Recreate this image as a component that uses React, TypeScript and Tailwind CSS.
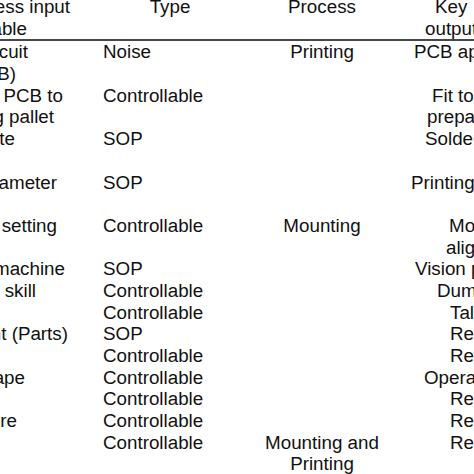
import React from "react";

type Cell = { t: string; cls: string } | null;

interface Line {
  input: Cell;
  type?: string;
  process?: string;
  output: Cell;
}

// one entry per text line of the table body
const lines: Line[] = [
  { input: { t: "Printed circuit", cls: "pr-[75px]" }, type: "Noise", process: "Printing", output: { t: "PCB appearance", cls: "pl-[7px]" } },
  { input: { t: "board (PCB)", cls: "pr-[87px]" }, output: null },
  { input: { t: "Fit PCB to", cls: "pr-[40px]" }, type: "Controllable", output: { t: "Fit to the", cls: "pl-[25px]" } },
  { input: { t: "printing pallet", cls: "pr-[49px]" }, output: { t: "preparation", cls: "pl-[20px]" } },
  { input: { t: "Solder paste", cls: "pr-[88px]" }, type: "SOP", output: { t: "Solder paste", cls: "pl-[18px]" } },
  { input: null, output: null },
  { input: { t: "Printing parameter", cls: "pr-[46px]" }, type: "SOP", output: { t: "Printing quality", cls: "pl-[4px]" } },
  { input: null, output: null },
  { input: { t: "Mounter setting", cls: "pr-[46px]" }, type: "Controllable", process: "Mounting", output: { t: "Mounting", cls: "pl-[42px]" } },
  { input: null, output: { t: "alignment", cls: "pl-[39px]" } },
  { input: { t: "Mounting machine", cls: "pr-[38px]" }, type: "SOP", output: { t: "Vision process", cls: "pl-[8px]" } },
  { input: { t: "Operator skill", cls: "pr-[67px]" }, type: "Controllable", output: { t: "Dummy", cls: "pl-[30px]" } },
  { input: null, type: "Controllable", output: { t: "Tally", cls: "pl-[43px]" } },
  { input: { t: "Component (Parts)", cls: "pr-[35px]" }, type: "SOP", output: { t: "Reliability", cls: "pl-[43px]" } },
  { input: null, type: "Controllable", output: { t: "Reliability", cls: "pl-[43px]" } },
  { input: { t: "Tape", cls: "pr-[78px]" }, type: "Controllable", output: { t: "Operation", cls: "pl-[17px]" } },
  { input: null, type: "Controllable", output: { t: "Reliability", cls: "pl-[43px]" } },
  { input: { t: "Temperature", cls: "pr-[86px]" }, type: "Controllable", output: { t: "Reliability", cls: "pl-[43px]" } },
  { input: null, type: "Controllable", process: "Mounting and", output: { t: "Reliability", cls: "pl-[43px]" } },
  { input: null, process: "Printing", output: null },
];

const grid = "grid grid-cols-[103px_134px_170px_67px] auto-rows-[21.7px]";

function InputCell({ cell }: { cell: Cell }) {
  return (
    <div className="flex justify-end whitespace-nowrap">
      {cell && <span className={cell.cls}>{cell.t}</span>}
    </div>
  );
}

function OutputCell({ cell }: { cell: Cell }) {
  return (
    <div className="overflow-hidden whitespace-nowrap">
      {cell && <span className={cell.cls}>{cell.t}</span>}
    </div>
  );
}

export default function App() {
  return (
    <div className="w-[474px] h-[474px] overflow-hidden bg-white text-[#111] font-['Liberation_Sans',Arial,sans-serif] text-[18.8px] leading-[21.7px]">
      <div className="mt-[-4px]">
        {/* header */}
        <div className={grid}>
          <InputCell cell={{ t: "Process input", cls: "pr-[33px]" }} />
          <div className="text-center">Type</div>
          <div className="text-center">Process</div>
          <OutputCell cell={{ t: "Key", cls: "pl-[28px]" }} />
          <InputCell cell={{ t: "variable", cls: "pr-[76px]" }} />
          <div />
          <div />
          <OutputCell cell={{ t: "output", cls: "pl-[18px]" }} />
        </div>
        <div className="h-[2px] bg-[#474747]" />
        {/* body */}
        <div className={grid}>
          {lines.map((l, i) => (
            <React.Fragment key={i}>
              <InputCell cell={l.input} />
              <div className="whitespace-nowrap">{l.type ?? ""}</div>
              <div className="text-center whitespace-nowrap">{l.process ?? ""}</div>
              <OutputCell cell={l.output} />
            </React.Fragment>
          ))}
        </div>
      </div>
    </div>
  );
}
